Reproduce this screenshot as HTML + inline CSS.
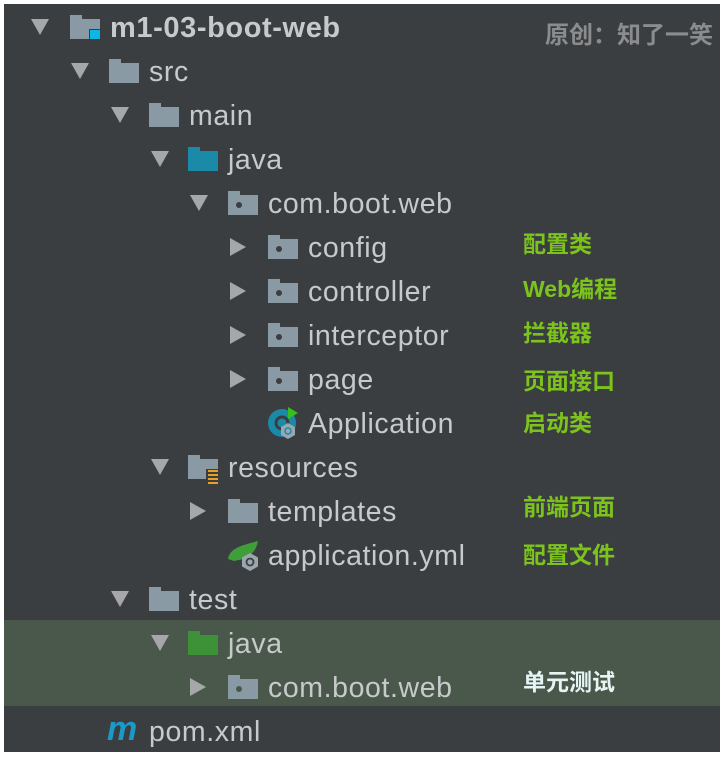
<!DOCTYPE html>
<html><head><meta charset="utf-8"><style>
body{margin:0;width:728px;height:757px;background:#fff;position:relative;overflow:hidden;font-family:"Liberation Sans","Noto Sans CJK SC",sans-serif}
#p{position:absolute;left:4px;top:4px;width:716px;height:748px;background:#3b3e41}
#hl{position:absolute;left:4px;top:620px;width:716px;height:86px;background:#4a584b}
.r{position:absolute;height:44px;left:0;width:728px}
.t{position:absolute;top:14px;width:0;height:0}
.td{border-left:9px solid transparent;border-right:9px solid transparent;border-top:16px solid #a5a7a9}
.tr{border-top:9px solid transparent;border-bottom:9px solid transparent;border-left:16px solid #a5a7a9;top:13px}
.f{position:absolute;top:10px;width:30px;height:24px}
.n{position:absolute;top:8px;font-size:28.5px;letter-spacing:0.6px;color:#c7c9cb;line-height:30px;white-space:nowrap}
.g{position:absolute;left:523px;font-size:23px;font-weight:bold;color:#7cc31c;line-height:26px;white-space:nowrap}
</style></head><body>
<div id="p"></div><div id="hl"></div>
<div style="position:absolute;left:545px;top:15px;font-size:24px;font-weight:bold;color:#8a8c8e;white-space:nowrap">原创：知了一笑</div>

<div class="r" style="top:5px"><div class="t td" style="left:31px"></div>
<svg class="f" style="left:70px" viewBox="0 0 30 24"><path d="M0 0h12v4h18v20H0z" fill="#8a9aa4"/><rect x="19" y="14" width="11" height="11" fill="#3b3e41"/><rect x="20" y="15" width="10" height="9" fill="#0eb6e8"/></svg>
<div class="n" style="left:110px;font-weight:bold;font-size:29px;letter-spacing:0.6px">m1-03-boot-web</div></div>

<div class="r" style="top:49px"><div class="t td" style="left:71px"></div>
<svg class="f" style="left:109px" viewBox="0 0 30 24"><path d="M0 0h12v4h18v20H0z" fill="#8a9aa4"/></svg>
<div class="n" style="left:149px">src</div></div>

<div class="r" style="top:93px"><div class="t td" style="left:111px"></div>
<svg class="f" style="left:149px" viewBox="0 0 30 24"><path d="M0 0h12v4h18v20H0z" fill="#8a9aa4"/></svg>
<div class="n" style="left:189px">main</div></div>

<div class="r" style="top:137px"><div class="t td" style="left:151px"></div>
<svg class="f" style="left:188px" viewBox="0 0 30 24"><path d="M0 0h12v4h18v20H0z" fill="#1b8aa8"/></svg>
<div class="n" style="left:228px">java</div></div>

<div class="r" style="top:181px"><div class="t td" style="left:190px"></div>
<svg class="f" style="left:228px" viewBox="0 0 30 24"><path d="M0 0h12v4h18v20H0z" fill="#8a9aa4"/><circle cx="11" cy="14" r="3" fill="#3b3e41"/></svg>
<div class="n" style="left:268px">com.boot.web</div></div>

<div class="r" style="top:225px"><div class="t tr" style="left:230px"></div>
<svg class="f" style="left:268px" viewBox="0 0 30 24"><path d="M0 0h12v4h18v20H0z" fill="#8a9aa4"/><circle cx="11" cy="14" r="3" fill="#3b3e41"/></svg>
<div class="n" style="left:308px">config</div><div class="g" style="top:6px">配置类</div></div>

<div class="r" style="top:269px"><div class="t tr" style="left:230px"></div>
<svg class="f" style="left:268px" viewBox="0 0 30 24"><path d="M0 0h12v4h18v20H0z" fill="#8a9aa4"/><circle cx="11" cy="14" r="3" fill="#3b3e41"/></svg>
<div class="n" style="left:308px">controller</div><div class="g" style="top:7px">Web编程</div></div>

<div class="r" style="top:313px"><div class="t tr" style="left:230px"></div>
<svg class="f" style="left:268px" viewBox="0 0 30 24"><path d="M0 0h12v4h18v20H0z" fill="#8a9aa4"/><circle cx="11" cy="14" r="3" fill="#3b3e41"/></svg>
<div class="n" style="left:308px">interceptor</div><div class="g" style="top:7px">拦截器</div></div>

<div class="r" style="top:357px"><div class="t tr" style="left:230px"></div>
<svg class="f" style="left:268px" viewBox="0 0 30 24"><path d="M0 0h12v4h18v20H0z" fill="#8a9aa4"/><circle cx="11" cy="14" r="3" fill="#3b3e41"/></svg>
<div class="n" style="left:308px">page</div><div class="g" style="top:11px">页面接口</div></div>

<div class="r" style="top:401px">
<svg style="position:absolute;left:266px;top:4px" width="36" height="36" viewBox="0 0 36 36"><circle cx="16" cy="18" r="14" fill="#1b8aa8"/><circle cx="16" cy="18" r="6" fill="none" stroke="#3b3e41" stroke-width="3"/><path d="M22 2l10 6-10 6z" fill="#35c01e"/><path d="M22 18l7 4v8l-7 4-7-4v-8z" fill="#9aa7b0"/><circle cx="22" cy="26" r="3" fill="none" stroke="#1b8aa8" stroke-width="1.5"/></svg>
<div class="n" style="left:308px">Application</div><div class="g" style="top:9px">启动类</div></div>

<div class="r" style="top:445px"><div class="t td" style="left:151px"></div>
<svg class="f" style="left:188px;height:30px" viewBox="0 0 30 30"><path d="M0 0h12v4h18v20H0z" fill="#8a9aa4"/><rect x="18" y="14" width="12" height="14" fill="#3b3e41"/><path d="M20 16h10M20 20h10M20 24h10M20 28h10" stroke="#e8a020" stroke-width="2"/></svg>
<div class="n" style="left:228px">resources</div></div>

<div class="r" style="top:489px"><div class="t tr" style="left:190px"></div>
<svg class="f" style="left:228px" viewBox="0 0 30 24"><path d="M0 0h12v4h18v20H0z" fill="#8a9aa4"/></svg>
<div class="n" style="left:268px">templates</div><div class="g" style="top:5px">前端页面</div></div>

<div class="r" style="top:533px">
<svg style="position:absolute;left:226px;top:6px" width="36" height="34" viewBox="0 0 36 34"><path d="M2 20C4 8 18 6 32 2 30 14 22 20 8 22z" fill="#3f9d3a"/><path d="M24 14l8 4.5v9L24 32l-8-4.5v-9z" fill="#9aa7b0"/><circle cx="24" cy="23" r="3.5" fill="none" stroke="#3b3e41" stroke-width="1.8"/></svg>
<div class="n" style="left:268px">application.yml</div><div class="g" style="top:9px">配置文件</div></div>

<div class="r" style="top:577px"><div class="t td" style="left:111px"></div>
<svg class="f" style="left:149px" viewBox="0 0 30 24"><path d="M0 0h12v4h18v20H0z" fill="#8a9aa4"/></svg>
<div class="n" style="left:189px">test</div></div>

<div class="r" style="top:621px"><div class="t td" style="left:151px"></div>
<svg class="f" style="left:188px" viewBox="0 0 30 24"><path d="M0 0h12v4h18v20H0z" fill="#3d9137"/></svg>
<div class="n" style="left:228px">java</div></div>

<div class="r" style="top:665px"><div class="t tr" style="left:190px"></div>
<svg class="f" style="left:228px" viewBox="0 0 30 24"><path d="M0 0h12v4h18v20H0z" fill="#8a9aa4"/><circle cx="11" cy="14" r="3" fill="#4a584b"/></svg>
<div class="n" style="left:268px">com.boot.web</div><div class="g" style="top:4px;color:#e6f4f4">单元测试</div></div>

<div class="r" style="top:709px">
<div style="position:absolute;left:107px;top:5px;font-size:34px;font-weight:bold;font-style:italic;color:#1a9ac8;line-height:30px">m</div>
<div class="n" style="left:149px">pom.xml</div></div>
</body></html>
